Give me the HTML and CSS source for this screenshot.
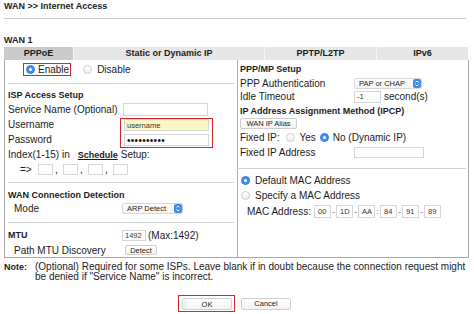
FILE: index.html
```html
<!DOCTYPE html>
<html lang="en">
  <head>
    <meta charset="UTF-8" />
    <meta name="viewport" content="width=device-width, initial-scale=1.0" />
    <title>WAN &gt;&gt; Internet Access</title>
    <link rel="stylesheet" href="styles.css">
  </head>
  <body>
    <div class="page">
      <div class="title">WAN &gt;&gt; Internet Access</div>
      <div class="rule"></div>
      <div class="wan-name">WAN 1</div>

      <div class="tabs">
        <div class="tab tab-pppoe active">PPPoE</div>
        <div class="tab tab-static">Static or Dynamic IP</div>
        <div class="tab tab-pptp">PPTP/L2TP</div>
        <div class="tab tab-ipv6">IPv6</div>
      </div>

      <div class="panel">
        <!-- left column -->
        <div class="col col-left">
          <div class="enable-row">
            <span class="opt marked"><span class="radio on"></span>Enable</span>
            <span class="opt opt-disable"><span class="radio"></span>Disable</span>
          </div>

          <div class="sect sect-isp">
            <div class="head">ISP Access Setup</div>
            <div class="isp-grid">
              <span class="lbl">Service Name (Optional)</span>
              <span class="input w85 service"></span>
              <span class="lbl">Username</span>
              <div class="cred">
                <span class="input w85 filled">username</span>
                <span class="input w85 pass">••••••••••</span>
              </div>
              <span class="lbl">Password</span>
            </div>
            <div class="row index-row">Index(1-15) in<a class="sched">Schedule</a>Setup:</div>
            <div class="row arrow-row">
              <span class="arrow">=&gt;</span>
              <span class="input tiny"></span><span class="comma">,</span>
              <span class="input tiny"></span><span class="comma">,</span>
              <span class="input tiny"></span><span class="comma">,</span>
              <span class="input tiny"></span>
            </div>
          </div>

          <div class="sect sect-detect">
            <div class="head">WAN Connection Detection</div>
            <div class="row mode-row">
              <span class="lbl-ind">Mode</span>
              <span class="select sel-mode">ARP Detect
                <svg class="stepper" width="8" height="9" viewBox="0 0 8 9"><rect width="8" height="9" rx="2" fill="#3b8cf3"/><path d="M2.4 3.6 L4 2 L5.6 3.6 M2.4 5.4 L4 7 L5.6 5.4" stroke="#fff" stroke-width="0.9" fill="none"/></svg>
              </span>
            </div>
          </div>

          <div class="sect sect-mtu">
            <div class="row mtu-row">
              <span class="head-inline">MTU</span>
              <span class="input w24">1492</span>
              <span class="max">(Max:1492)</span>
            </div>
            <div class="row pmtu-row">
              <span class="lbl-ind pmtu-lbl">Path MTU Discovery</span>
              <span class="btn btn-detect">Detect</span>
            </div>
          </div>
        </div>

        <!-- right column -->
        <div class="col col-right">
          <div class="sect-top">
            <div class="head">PPP/MP Setup</div>
            <div class="rrow r-auth">
              <span class="rlbl">PPP Authentication</span>
              <span class="select sel-auth">PAP or CHAP
                <svg class="stepper" width="8" height="9" viewBox="0 0 8 9"><rect width="8" height="9" rx="2" fill="#3b8cf3"/><path d="M2.4 3.6 L4 2 L5.6 3.6 M2.4 5.4 L4 7 L5.6 5.4" stroke="#fff" stroke-width="0.9" fill="none"/></svg>
              </span>
            </div>
            <div class="rrow r-idle">
              <span class="rlbl">Idle Timeout</span>
              <span class="input w27">-1</span>
              <span class="unit">second(s)</span>
            </div>
            <div class="head h-ipcp">IP Address Assignment Method (IPCP)</div>
            <div class="rrow r-alias">
              <span class="btn btn-alias">WAN IP Alias</span>
            </div>
            <div class="rrow r-fixed">
              <span>Fixed IP:</span>
              <span class="radio r-yes"></span>Yes
              <span class="radio on r-no"></span>No (Dynamic IP)
            </div>
            <div class="rrow r-fixaddr">
              <span class="rlbl">Fixed IP Address</span>
              <span class="input w70"></span>
            </div>
          </div>

          <div class="sect sect-mac">
            <div class="rrow r-mac-opt"><span class="radio on"></span>Default MAC Address</div>
            <div class="rrow r-mac-opt"><span class="radio"></span>Specify a MAC Address</div>
            <div class="rrow r-mac">
              <span class="mac-lbl">MAC Address:</span>
              <span class="input oct">00</span><span class="sep">-</span>
              <span class="input oct">1D</span><span class="sep">-</span>
              <span class="input oct">AA</span><span class="sep">:</span>
              <span class="input oct">84</span><span class="sep">-</span>
              <span class="input oct">91</span><span class="sep">-</span>
              <span class="input oct">89</span>
            </div>
          </div>
        </div>
      </div>

      <div class="note">
        <span class="note-lbl">Note:</span>
        <span class="note-text">(Optional) Required for some ISPs. Leave blank if in doubt because the connection request might<br>be denied if "Service Name" is incorrect.</span>
      </div>

      <div class="actions">
        <span class="ok-wrap"><span class="btn btn-main">OK</span></span>
        <span class="btn btn-main btn-cancel">Cancel</span>
      </div>
    </div>
  </body>
</html>
```

FILE: styles.css
```css
* {
  box-sizing: border-box;
}
body {
  margin: 0;
  background-color: #fff;
  color: #1c1c1c;
  font-family: "Liberation Sans", Arial, sans-serif;
  font-size: 10px;
}
.page {
  padding: 0 4px;
}
.title {
  height: 12px;
  line-height: 12px;
  font-size: 9px;
  font-weight: bold;
}
.rule {
  width: 462px;
  margin-top: 6px;
  border-top: 1px solid #c8c8c8;
}
.wan-name {
  margin-top: 15px;
  height: 12px;
  line-height: 12px;
  font-size: 9px;
  font-weight: bold;
}

/* tabs */
.tabs {
  display: flex;
  width: 464px;
  height: 13px;
  margin-top: 1px;
}
.tab {
  background-color: #e6e6e6;
  border-left: 1px solid #f6f6f6;
  font-size: 9px;
  font-weight: bold;
  line-height: 13px;
  text-align: center;
}
.tab.active {
  background-color: #cacaca;
  border-left: none;
}
.tab-pppoe { width: 69px; }
.tab-static { width: 191px; }
.tab-pptp { width: 112px; }
.tab-ipv6 { width: 92px; }

/* panel */
.panel {
  display: flex;
  width: 465px;
  border: 1px solid #a8a8a8;
  border-top: none;
}
.col-left {
  width: 233px;
  border-right: 1px solid #b0b0b0;
  padding: 0 3px;
}
.col-right {
  flex: 1;
  padding: 2px 2px 0;
}
.sect {
  border-top: 1px solid #d4d4d4;
}
.head {
  height: 14px;
  line-height: 14px;
  font-size: 9px;
  font-weight: bold;
}
.row {
  display: flex;
  align-items: center;
}

/* radios */
.radio {
  display: inline-block;
  flex: none;
  position: relative;
  width: 9px;
  height: 9px;
  border: 1px solid #cdcdcd;
  border-radius: 50%;
  background: linear-gradient(#fff, #efefef);
}
.radio.on {
  border-color: #2f80e8;
  background: #3b8ef5;
}
.radio.on::after {
  content: "";
  position: absolute;
  left: 2px;
  top: 2px;
  width: 3px;
  height: 3px;
  border-radius: 50%;
  background: #fff;
}

/* fields */
.input {
  display: inline-flex;
  align-items: center;
  flex: none;
  border: 1px solid #d6d6d6;
  background: #fff;
  padding-left: 2px;
  font-size: 7.5px;
  color: #333;
}
.select {
  display: inline-flex;
  align-items: center;
  justify-content: space-between;
  flex: none;
  border: 1px solid #d8d8d8;
  border-radius: 2px;
  background: linear-gradient(#fff, #f4f4f4);
  padding: 0 0 0 4px;
  font-size: 7.5px;
  color: #222;
}
.stepper {
  display: block;
}
.btn {
  display: inline-flex;
  align-items: center;
  justify-content: center;
  border: 1px solid #cfcfcf;
  border-radius: 2px;
  background: linear-gradient(#fff, #f3f3f3);
  font-size: 7.5px;
  color: #222;
}

/* enable */
.enable-row {
  display: flex;
  align-items: flex-start;
  height: 23px;
  padding: 3px 0 0 15px;
}
.opt {
  display: flex;
  align-items: center;
  height: 13px;
}
.opt .radio {
  margin-right: 3px;
}
.opt.marked {
  border: 1px solid #d4262c;
  padding: 0 1px 0 2px;
}
.opt-disable {
  margin-left: 12px;
}
.opt-disable .radio {
  margin-right: 5px;
}

/* isp */
.sect-isp {
  padding: 4px 0 5px;
}
.isp-grid {
  display: grid;
  grid-template-columns: 115px 93px;
  grid-template-rows: 15px 15px 15px;
}
.lbl {
  line-height: 15px;
}
.w85 {
  width: 85px;
  height: 12px;
}
.service {
  align-self: center;
  height: 13px;
}
.cred {
  grid-column: 2;
  grid-row: 2 / 4;
  display: flex;
  flex-direction: column;
  gap: 3px;
  width: 93px;
  height: 30px;
  margin: 1px 0 0 -3px;
  padding: 0 3px;
  border: 1px solid #d4262c;
}
.input.filled {
  background: #fbf8c3;
}
.input.pass {
  font-size: 10px;
  letter-spacing: 0.3px;
  color: #111;
}
.index-row {
  height: 15px;
}
.sched {
  margin: 0 3px 0 8px;
  font-size: 9px;
  font-weight: bold;
  text-decoration: underline;
}
.arrow-row {
  height: 15px;
  padding-left: 12px;
}
.arrow {
  width: 18px;
}
.tiny {
  width: 15px;
  height: 11px;
}
.comma {
  width: 10px;
  padding-left: 2px;
}

/* detection */
.sect-detect {
  padding: 5px 0 7px;
}
.mode-row {
  height: 13px;
}
.lbl-ind {
  width: 114px;
  padding-left: 6px;
}
.sel-mode {
  width: 61px;
  height: 11px;
}

/* mtu */
.sect-mtu {
  padding-top: 4px;
}
.mtu-row {
  height: 16px;
}
.head-inline {
  width: 114px;
  font-size: 9px;
  font-weight: bold;
}
.w24 {
  width: 24px;
  height: 11px;
}
.max {
  margin-left: 2px;
}
.pmtu-row {
  height: 14px;
}
.pmtu-lbl {
  width: 117px;
}
.btn-detect {
  width: 32px;
  height: 10px;
}

/* right column */
.rrow {
  display: flex;
  align-items: center;
}
.rlbl {
  width: 114px;
}
.r-auth {
  height: 14px;
}
.sel-auth {
  width: 68px;
  height: 11px;
}
.r-idle {
  height: 13px;
}
.w27 {
  width: 27px;
  height: 12px;
}
.unit {
  margin-left: 3px;
}
.h-ipcp {
  height: 13px;
  line-height: 13px;
  margin-top: 2px;
}
.r-alias {
  height: 11px;
}
.btn-alias {
  width: 57px;
  height: 11px;
}
.r-fixed {
  height: 15px;
  margin-top: 1px;
}
.r-yes {
  margin: 0 4px 0 7px;
}
.r-no {
  margin: 0 4px 0 4px;
}
.r-fixaddr {
  height: 15px;
}
.w70 {
  width: 70px;
  height: 11px;
}
.sect-top {
  padding-bottom: 8px;
}
.sect-mac {
  margin-left: -3px;
  padding: 4px 0 0 3px;
}
.r-mac-opt {
  height: 15px;
  padding-left: 1px;
}
.r-mac-opt .radio {
  margin-right: 5px;
}
.r-mac {
  height: 16px;
  padding-left: 7px;
}
.mac-lbl {
  width: 67px;
}
.oct {
  width: 17px;
  height: 13px;
  padding-left: 3px;
}
.sep {
  width: 5px;
  text-align: center;
  font-size: 8px;
  color: #555;
}

/* note & buttons */
.note {
  display: flex;
  margin-top: 4px;
  line-height: 10px;
}
.note-lbl {
  flex: none;
  width: 31px;
  font-size: 9px;
  font-weight: bold;
}
.note-text {
  white-space: nowrap;
}
.actions {
  display: flex;
  align-items: center;
  margin-top: 13px;
  padding-left: 174px;
}
.ok-wrap {
  display: flex;
  width: 57px;
  height: 17px;
  padding: 2px 2px 1px 3px;
  border: 1px solid #d4262c;
}
.btn-main {
  width: 50px;
  height: 12px;
}
.btn-cancel {
  margin-left: 6px;
}
```
